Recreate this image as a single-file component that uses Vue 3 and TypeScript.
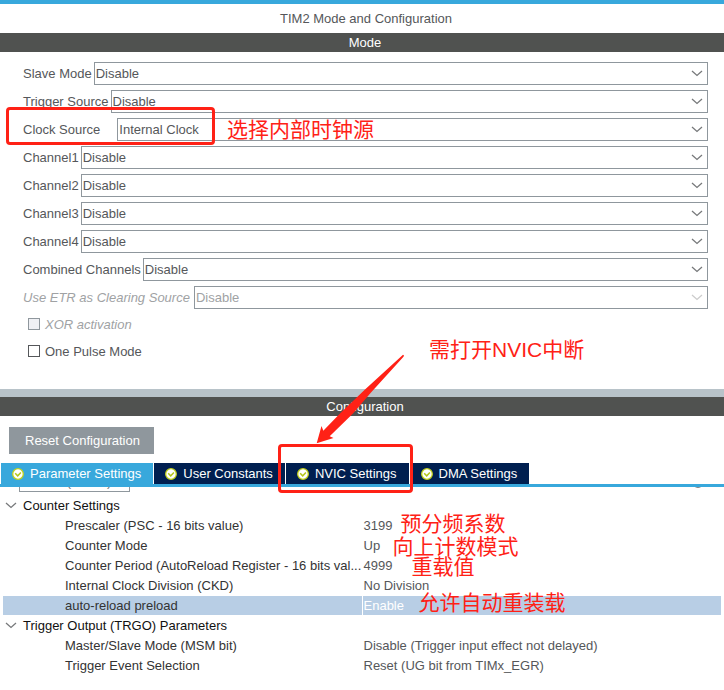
<script setup lang="ts">
import { ref } from 'vue'

interface ModeField {
  id: string
  label: string
  value: string
  disabled?: boolean
  padded?: boolean
  note?: string
}

interface Param {
  name: string
  value: string
  note?: string
  noteClass?: string
  selected?: boolean
}

interface Group {
  title: string
  params: Param[]
}

const fields: ModeField[] = [
  { id: 'slave', label: 'Slave Mode', value: 'Disable' },
  { id: 'trigger', label: 'Trigger Source', value: 'Disable' },
  { id: 'clock', label: 'Clock Source', value: 'Internal Clock', padded: true, note: '选择内部时钟源' },
  { id: 'ch1', label: 'Channel1', value: 'Disable' },
  { id: 'ch2', label: 'Channel2', value: 'Disable' },
  { id: 'ch3', label: 'Channel3', value: 'Disable' },
  { id: 'ch4', label: 'Channel4', value: 'Disable' },
  { id: 'combined', label: 'Combined Channels', value: 'Disable' },
  { id: 'etr', label: 'Use ETR as Clearing Source', value: 'Disable', disabled: true },
]

const tabs = ['Parameter Settings', 'User Constants', 'NVIC Settings', 'DMA Settings']
const activeTab = ref('Parameter Settings')

const groups: Group[] = [
  {
    title: 'Counter Settings',
    params: [
      { name: 'Prescaler (PSC - 16 bits value)', value: '3199', note: '预分频系数', noteClass: 'at-prescaler' },
      { name: 'Counter Mode', value: 'Up', note: '向上计数模式', noteClass: 'at-mode' },
      { name: 'Counter Period (AutoReload Register - 16 bits val...', value: '4999', note: '重载值', noteClass: 'at-period' },
      { name: 'Internal Clock Division (CKD)', value: 'No Division' },
      { name: 'auto-reload preload', value: 'Enable', note: '允许自动重装载', noteClass: 'at-preload', selected: true },
    ],
  },
  {
    title: 'Trigger Output (TRGO) Parameters',
    params: [
      { name: 'Master/Slave Mode (MSM bit)', value: 'Disable (Trigger input effect not delayed)' },
      { name: 'Trigger Event Selection', value: 'Reset (UG bit from TIMx_EGR)' },
    ],
  },
]
</script>

<template>
  <main class="page">
    <h1 class="title">TIM2 Mode and Configuration</h1>

    <section>
      <h2 class="bar">Mode</h2>
      <div class="mode">
        <div v-for="f in fields" :key="f.id" class="field" :class="{ disabled: f.disabled }">
          <label :for="f.id" :class="{ padded: f.padded }">{{ f.label }}</label>
          <div class="combo">
            <select :id="f.id" :disabled="f.disabled">
              <option>{{ f.value }}</option>
            </select>
            <svg class="chevron" viewBox="0 0 12 7" width="12" height="7"><path d="M1 1l5 4.5L11 1" /></svg>
          </div>
          <template v-if="f.note">
            <span class="frame clock-frame"></span>
            <span class="note clock-note">{{ f.note }}</span>
          </template>
        </div>
        <div class="checks">
          <label class="check disabled"><input type="checkbox" disabled />XOR activation</label>
          <label class="check"><input type="checkbox" />One Pulse Mode</label>
        </div>
      </div>
    </section>

    <section class="config">
      <h2 class="bar">Configuration</h2>
      <button class="reset" type="button">Reset Configuration</button>

      <nav class="tabs" role="tablist">
        <button
          v-for="t in tabs"
          :key="t"
          class="tab"
          :class="{ active: t === activeTab }"
          type="button"
          role="tab"
          :aria-selected="t === activeTab"
          @click="activeTab = t"
        >
          <svg viewBox="0 0 12 12" width="12" height="12">
            <circle cx="6" cy="6" r="5.3" fill="#fff" stroke="#c3d21c" stroke-width="1.3" />
            <path d="M3.200 5.200L5.700 7.800 8.900 4.500" fill="none" stroke="#b4c61a" stroke-width="1.5" />
          </svg>
          <span>{{ t }}</span>
          <span v-if="t === 'NVIC Settings'" class="frame nvic-frame"></span>
        </button>
      </nav>

      <div class="search">
        <input type="text" placeholder="Search (Ctrl+F)" aria-label="Search" />
        <svg viewBox="0 0 14 14" width="14" height="14"><circle cx="7" cy="7" r="6" fill="none" stroke="#555" stroke-width="1.5" /></svg>
      </div>

      <table class="params">
        <colgroup>
          <col class="col-name" />
          <col />
        </colgroup>
        <tbody v-for="g in groups" :key="g.title">
          <tr>
            <th colspan="2">
              <svg class="chevron" viewBox="0 0 12 7" width="12" height="7"><path d="M1 1l5 4.5L11 1" /></svg>{{ g.title }}
            </th>
          </tr>
          <tr v-for="p in g.params" :key="p.name" :class="{ selected: p.selected }">
            <td class="name">{{ p.name }}</td>
            <td class="value">
              {{ p.value }}<span v-if="p.note" class="note" :class="p.noteClass">{{ p.note }}</span>
            </td>
          </tr>
        </tbody>
      </table>

      <span class="note nvic-note">需打开NVIC中断</span>
      <svg class="arrow" viewBox="0 0 90 90" width="90" height="90">
        <path d="M87 .7L88 1.500 87.500 2.700 55 38.500 37 59.500 13.700 82.300 17.500 84 .7 89.300 5.500 72 7.300 76.700 24 59.500 49 35.500Z" fill="#ff2116" />
      </svg>
    </section>
  </main>
</template>

<style>
body {
  margin: 0;
  background: #fff;
}
</style>

<style scoped>
.page {
  border-top: 4px solid #38a8dc;
  color: #55575a;
  font: 13px/19px "Liberation Sans", "Noto Sans CJK SC", sans-serif;
}

.title,
.bar {
  margin: 0;
  padding-left: 8px;
  font-size: 13px;
  font-weight: 400;
  text-align: center;
}

.title {
  line-height: 29px;
}

.bar {
  padding-left: 6px;
  background: #505250;
  color: #fff;
}

button,
input,
select {
  margin: 0;
  color: inherit;
  font: inherit;
}

.mode {
  display: flex;
  flex-direction: column;
  gap: 5px;
  padding: 10px 16px 28px 23px;
}

.field {
  position: relative;
  display: flex;
  align-items: center;
  gap: 2px;
}

.padded {
  padding-right: 15px;
}

.field.disabled {
  gap: 4px;
}

.disabled {
  color: #a0a2a4;
}

.disabled label,
.check.disabled {
  font-style: italic;
}

.combo {
  position: relative;
  flex: 1;
  display: flex;
}

.combo select {
  flex: 1;
  height: 23px;
  padding: 0 24px 0 1px;
  border: 1px solid #8f979d;
  border-radius: 0;
  background: #fff;
  appearance: none;
  opacity: 1;
}

.chevron {
  fill: none;
  stroke: #77797b;
  stroke-width: 1.3;
}

.combo .chevron {
  position: absolute;
  top: 8px;
  right: 5px;
  pointer-events: none;
}

.disabled .chevron {
  stroke: #ccc;
}

.checks {
  display: flex;
  flex-direction: column;
  gap: 7px;
}

.check {
  display: flex;
  align-items: center;
  gap: 5px;
  height: 20px;
  padding-left: 5px;
}

.check input {
  width: 12px;
  height: 12px;
  border: 1px solid #55575a;
  background: #fff;
  appearance: none;
}

.check.disabled input {
  border-color: #8f979d;
  background: #eff0f4;
}

.config {
  position: relative;
  border-top: 8px solid #b8c3c9;
}

.reset {
  display: block;
  height: 27px;
  margin: 11px 9px 9px;
  padding: 0 14px 0 16px;
  border: 0;
  background: #8f979d;
  color: #fff;
}

.tabs {
  display: flex;
  gap: 1px;
  padding-left: 1px;
  border-bottom: 3px solid #38a8dc;
}

.tab {
  position: relative;
  display: flex;
  align-items: center;
  gap: 6px;
  height: 21px;
  padding: 0 12px 0 11px;
  border: 0;
  background: #001f50;
  color: #fff;
}

.tab.active {
  background: #38a8dc;
}

.search {
  display: flex;
  align-items: flex-end;
  justify-content: space-between;
  height: 5px;
  margin-bottom: 4px;
  padding: 0 19px;
  overflow: hidden;
}

.search input {
  box-sizing: border-box;
  width: 111px;
  height: 23px;
  padding: 1px 2px 0;
  border: 1px solid #8f979d;
}

.search svg {
  margin-bottom: 4px;
}

.params {
  width: calc(100% - 6px);
  margin: 0 3px;
  border-collapse: collapse;
  table-layout: fixed;
}

.col-name {
  width: 50%;
}

.params th,
.params td {
  height: 19px;
  padding: 0;
  border-bottom: 1px solid #fff;
  font-weight: 400;
  text-align: left;
  white-space: nowrap;
}

.params th {
  padding-left: 2px;
  color: #111;
}

.params th .chevron {
  margin: 0 6px 1px 0;
}

.params .name {
  padding-left: 62px;
  color: #333;
}

.params .value {
  position: relative;
  padding-left: 1px;
  border-left: 1px solid #fff;
}

.selected td {
  background: #b8cee5;
  background-clip: padding-box;
}

.selected .value {
  color: #fff;
}

.note {
  position: absolute;
  color: #ff2116;
  font-size: 21px;
  line-height: 24px;
  white-space: nowrap;
}

.frame {
  position: absolute;
  z-index: 1;
  border: 3px solid #ff2116;
  border-radius: 4px;
  pointer-events: none;
}

.clock-frame {
  top: -11px;
  left: -17px;
  width: 203px;
  height: 32px;
}

.clock-note {
  top: 0;
  left: 204px;
}

.nvic-frame {
  inset: -19px -4px -9px -8px;
}

.nvic-note {
  top: -59px;
  left: 429px;
}

.arrow {
  position: absolute;
  top: -43px;
  left: 316px;
  pointer-events: none;
}

.at-prescaler {
  top: -4px;
  left: 38px;
}

.at-mode {
  top: -1px;
  left: 30px;
}

.at-period {
  top: -1px;
  left: 49px;
}

.at-preload {
  top: -5px;
  left: 56px;
}
</style>
